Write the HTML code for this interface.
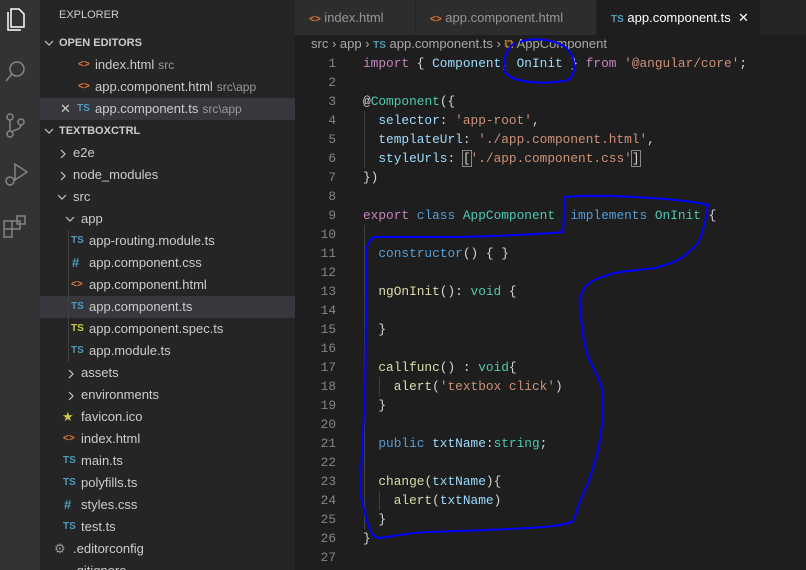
<!DOCTYPE html>
<html><head><meta charset="utf-8"><style>
*{margin:0;padding:0;box-sizing:border-box}
html,body{width:806px;height:570px;overflow:hidden}
body{background:#1e1e1e;position:relative;font-family:"Liberation Sans",sans-serif}
#act{position:absolute;left:0;top:0;width:40px;height:570px;background:#333}
#side{position:absolute;left:40px;top:0;width:255px;height:570px;background:#252526;color:#ccc;font-size:13px;overflow:hidden}
.row{position:absolute;left:0;width:255px;height:22px;line-height:22px;white-space:nowrap}
.sel{background:#37373d}
.h{font-weight:bold;font-size:11px}
.dim{color:#999;font-size:12px;margin-left:4px}
.ic{position:absolute;top:0;font-size:10px;font-weight:bold}
.ts{color:#519aba}.tsy{color:#cbcb41}.htm{color:#e37933}.css{color:#519aba;font-size:13px}
.cv{position:absolute;top:7px}
#tabs{position:absolute;left:295px;top:0;width:511px;height:35px;background:#252526}
.tab{position:absolute;top:0;height:35px;line-height:35px;font-size:13px;color:#969696;background:#2d2d2d;padding-left:14px}
#bc{position:absolute;left:311px;top:35px;height:18px;line-height:18px;font-size:13px;color:#a9a9a9}
#code{position:absolute;left:295px;top:54px;font-family:"Liberation Mono",monospace;font-size:12.8px}
.ln{position:absolute;left:0;width:41px;text-align:right;color:#858585;height:19px;line-height:19px}
.cl{position:absolute;left:68px;height:19px;line-height:19px;white-space:pre;color:#d4d4d4}
.k{color:#c586c0}.b{color:#569cd6}.t{color:#4ec9b0}.s{color:#ce9178}.v{color:#9cdcfe}.f{color:#dcdcaa}
.g{position:absolute;width:1px;background:#404040}
</style></head><body>
<div id="act">
<svg width="40" height="260" viewBox="0 0 40 260" fill="none" stroke="#858585" stroke-width="1.5">
<path d="M11 9h8l5 5v13H11z M8 12v18h13" stroke="#fff"/>
<circle cx="17" cy="69" r="7"/><path d="M12 74l-6 7"/>
<circle cx="10" cy="117" r="3"/><circle cx="10" cy="134" r="3"/><circle cx="21" cy="122" r="3"/><path d="M10 120v11M21 125c0 5-8 5-10 7"/>
<path d="M15 164l12 8-12 8z"/><circle cx="10" cy="181" r="4"/>
<path d="M4 221h8v8H4zM12 221h8v8h-8zM4 229h8v8H4zM17 216h8v8h-8z"/>
</svg>
</div>
<div id="side">
<div class="row" style="top:4px;padding-left:19px;font-size:11px">EXPLORER</div>
<div class="row h" style="top:32px"><svg class="cv" style="left:4px" width="10" height="8"><path d="M1 2l4 4 4-4" stroke="#c5c5c5" fill="none" stroke-width="1.2"/></svg><span style="position:absolute;left:19px">OPEN EDITORS</span></div>
<div class="row" style="top:54px"><span class="ic htm" style="left:38px">&lt;&gt;</span><span style="position:absolute;left:55px">index.html<span class="dim">src</span></span></div>
<div class="row" style="top:76px"><span class="ic htm" style="left:38px">&lt;&gt;</span><span style="position:absolute;left:55px">app.component.html<span class="dim">src\app</span></span></div>
<div class="row sel" style="top:98px"><span style="position:absolute;left:20px;color:#ccc">✕</span><span class="ic ts" style="left:37px">TS</span><span style="position:absolute;left:55px">app.component.ts<span class="dim">src\app</span></span></div>
<div class="row h" style="top:120px"><svg class="cv" style="left:4px" width="10" height="8"><path d="M1 2l4 4 4-4" stroke="#c5c5c5" fill="none" stroke-width="1.2"/></svg><span style="position:absolute;left:19px">TEXTBOXCTRL</span></div>
<div class="row" style="top:142px"><svg class="cv" style="left:19px" width="8" height="10"><path d="M2 1l4 4-4 4" stroke="#c5c5c5" fill="none" stroke-width="1.2"/></svg><span style="position:absolute;left:33px">e2e</span></div>
<div class="row" style="top:164px"><svg class="cv" style="left:19px" width="8" height="10"><path d="M2 1l4 4-4 4" stroke="#c5c5c5" fill="none" stroke-width="1.2"/></svg><span style="position:absolute;left:33px">node_modules</span></div>
<div class="row" style="top:186px"><svg class="cv" style="left:17px" width="10" height="8"><path d="M1 2l4 4 4-4" stroke="#c5c5c5" fill="none" stroke-width="1.2"/></svg><span style="position:absolute;left:33px">src</span></div>
<div class="row" style="top:208px"><svg class="cv" style="left:25px" width="10" height="8"><path d="M1 2l4 4 4-4" stroke="#c5c5c5" fill="none" stroke-width="1.2"/></svg><span style="position:absolute;left:41px">app</span></div>
<div class="row" style="top:230px"><span class="ic ts" style="left:31px">TS</span><span style="position:absolute;left:49px">app-routing.module.ts</span></div>
<div class="row" style="top:252px"><span class="ic css" style="left:32px">#</span><span style="position:absolute;left:49px">app.component.css</span></div>
<div class="row" style="top:274px"><span class="ic htm" style="left:31px">&lt;&gt;</span><span style="position:absolute;left:49px">app.component.html</span></div>
<div class="row sel" style="top:296px"><span class="ic ts" style="left:31px">TS</span><span style="position:absolute;left:49px">app.component.ts</span></div>
<div class="row" style="top:318px"><span class="ic tsy" style="left:31px">TS</span><span style="position:absolute;left:49px">app.component.spec.ts</span></div>
<div class="row" style="top:340px"><span class="ic ts" style="left:31px">TS</span><span style="position:absolute;left:49px">app.module.ts</span></div>
<div class="g" style="left:28px;top:230px;height:132px"></div>
<div class="row" style="top:362px"><svg class="cv" style="left:27px" width="8" height="10"><path d="M2 1l4 4-4 4" stroke="#c5c5c5" fill="none" stroke-width="1.2"/></svg><span style="position:absolute;left:41px">assets</span></div>
<div class="row" style="top:384px"><svg class="cv" style="left:27px" width="8" height="10"><path d="M2 1l4 4-4 4" stroke="#c5c5c5" fill="none" stroke-width="1.2"/></svg><span style="position:absolute;left:41px">environments</span></div>
<div class="row" style="top:406px"><span style="position:absolute;left:22px;color:#cbcb41">★</span><span style="position:absolute;left:41px">favicon.ico</span></div>
<div class="row" style="top:428px"><span class="ic htm" style="left:23px">&lt;&gt;</span><span style="position:absolute;left:41px">index.html</span></div>
<div class="row" style="top:450px"><span class="ic ts" style="left:23px">TS</span><span style="position:absolute;left:41px">main.ts</span></div>
<div class="row" style="top:472px"><span class="ic ts" style="left:23px">TS</span><span style="position:absolute;left:41px">polyfills.ts</span></div>
<div class="row" style="top:494px"><span class="ic css" style="left:24px">#</span><span style="position:absolute;left:41px">styles.css</span></div>
<div class="row" style="top:516px"><span class="ic ts" style="left:23px">TS</span><span style="position:absolute;left:41px">test.ts</span></div>
<div class="row" style="top:538px"><span style="position:absolute;left:14px;color:#999">⚙</span><span style="position:absolute;left:33px">.editorconfig</span></div>
<div class="row" style="top:560px"><span style="position:absolute;left:33px">.gitignore</span></div>
</div>
<div id="tabs">
<div class="tab" style="left:0;width:120px"><span class="htm" style="font-size:10px;font-weight:bold">&lt;&gt;</span> index.html</div>
<div class="tab" style="left:121px;width:180px"><span class="htm" style="font-size:10px;font-weight:bold">&lt;&gt;</span> app.component.html</div>
<div class="tab" style="left:302px;width:163px;background:#1e1e1e;color:#fff"><span class="ts" style="font-size:10px;font-weight:bold">TS</span> app.component.ts&nbsp; ✕</div>
</div>
<div id="bc">src › app › <span class="ts" style="font-size:10px;font-weight:bold">TS</span> app.component.ts › <span style="color:#ee9d28">⧉</span> AppComponent</div>
<div id="code">
<div class="ln" style="top:0">1</div><div class="cl" style="top:0"><span class="k">import</span> { <span class="v">Component</span>, <span class="v">OnInit</span> } <span class="k">from</span> <span class="s">'@angular/core'</span>;</div>
<div class="ln" style="top:19px">2</div>
<div class="ln" style="top:38px">3</div><div class="cl" style="top:38px">@<span class="t">Component</span>({</div>
<div class="ln" style="top:57px">4</div><div class="cl" style="top:57px">  <span class="v">selector</span>: <span class="s">'app-root'</span>,</div>
<div class="ln" style="top:76px">5</div><div class="cl" style="top:76px">  <span class="v">templateUrl</span>: <span class="s">'./app.component.html'</span>,</div>
<div class="ln" style="top:95px">6</div><div class="cl" style="top:95px">  <span class="v">styleUrls</span>: <span style="outline:1px solid #888">[</span><span class="s">'./app.component.css'</span><span style="outline:1px solid #888">]</span></div>
<div class="ln" style="top:114px">7</div><div class="cl" style="top:114px">})</div>
<div class="ln" style="top:133px">8</div>
<div class="ln" style="top:152px">9</div><div class="cl" style="top:152px"><span class="k">export</span> <span class="b">class</span> <span class="t">AppComponent</span>  <span class="b">implements</span> <span class="t">OnInit</span> {</div>
<div class="ln" style="top:171px">10</div>
<div class="ln" style="top:190px">11</div><div class="cl" style="top:190px">  <span class="b">constructor</span>() { }</div>
<div class="ln" style="top:209px">12</div>
<div class="ln" style="top:228px">13</div><div class="cl" style="top:228px">  <span class="f">ngOnInit</span>(): <span class="t">void</span> {</div>
<div class="ln" style="top:247px">14</div>
<div class="ln" style="top:266px">15</div><div class="cl" style="top:266px">  }</div>
<div class="ln" style="top:285px">16</div>
<div class="ln" style="top:304px">17</div><div class="cl" style="top:304px">  <span class="f">callfunc</span>() : <span class="t">void</span>{</div>
<div class="ln" style="top:323px">18</div><div class="cl" style="top:323px">    <span class="f">alert</span>(<span class="s">'textbox click'</span>)</div>
<div class="ln" style="top:342px">19</div><div class="cl" style="top:342px">  }</div>
<div class="ln" style="top:361px">20</div>
<div class="ln" style="top:380px">21</div><div class="cl" style="top:380px">  <span class="b">public</span> <span class="v">txtName</span>:<span class="t">string</span>;</div>
<div class="ln" style="top:399px">22</div>
<div class="ln" style="top:418px">23</div><div class="cl" style="top:418px">  <span class="f">change</span>(<span class="v">txtName</span>){</div>
<div class="ln" style="top:437px">24</div><div class="cl" style="top:437px">    <span class="f">alert</span>(<span class="v">txtName</span>)</div>
<div class="ln" style="top:456px">25</div><div class="cl" style="top:456px">  }</div>
<div class="ln" style="top:475px">26</div><div class="cl" style="top:475px">}</div>
<div class="ln" style="top:494px">27</div>
<div class="g" style="left:69px;top:57px;height:57px"></div>
<div class="g" style="left:69px;top:171px;height:304px"></div>
<div class="g" style="left:84px;top:323px;height:19px"></div>
<div class="g" style="left:84px;top:437px;height:19px"></div>
</div>
<svg style="position:absolute;left:0;top:0" width="806" height="570" fill="none" stroke="#0000ff" stroke-width="2">
<path d="M515 43C505 50 502 62 505 72C512 83 545 85 568 80C578 72 575 55 565 47C552 38 530 38 520 42"/>
<path d="M563 232L565 197C600 194 680 198 708 205C706 220 702 235 698 243C690 252 684 256 678 260C670 264 662 266 655 268C640 270 625 271 615 273C600 277 590 281 585 287C580 295 579 300 580 307C582 330 584 345 588 357C594 370 600 380 602 390C604 410 602 425 600 440C596 460 592 472 588 483C582 495 579 503 577 510C575 516 574 520 572 522C560 526 545 527 528 528C495 530 460 531 428 532C405 533 390 537 378 538C373 536 371 533 370 530C366 520 364 510 362 500C360 495 360 492 360 490C362 450 364 420 365 390C366 330 366 280 367 247C369 241 372 238 375 237C400 237 430 237 462 237C500 236 540 234 563 232"/>
</svg>
</body></html>
